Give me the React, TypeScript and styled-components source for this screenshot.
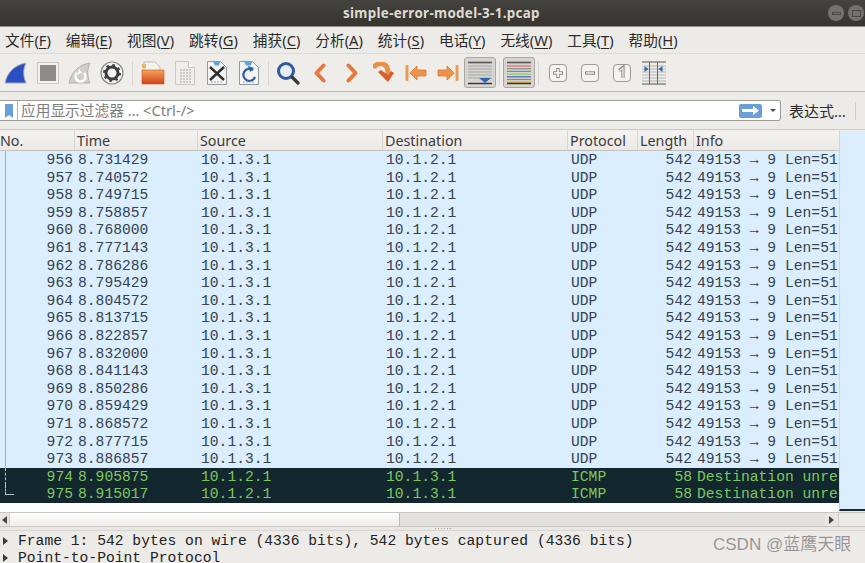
import styled, { createGlobalStyle } from "styled-components";

const GlobalStyle = createGlobalStyle`
  html, body { margin:0; padding:0; background:#edebe8; }
  body { width:865px; height:563px; overflow:hidden; }
`;

const UI = `"Noto Sans","Noto Sans CJK SC",sans-serif`;
const MONO = `"Liberation Mono","DejaVu Sans Mono",monospace`;

const Window = styled.div`
  position:relative;
  width:865px;
  height:563px;
  display:flex;
  flex-direction:column;
  overflow:hidden;
  background:#edebe8;
  font-family:${UI};
`;

const TitleBar = styled.div`
  height:27px;
  flex:none;
  display:flex;
  align-items:center;
  justify-content:flex-end;
  position:relative;
  background:linear-gradient(#45433f,#35342f);
  border-bottom:1px solid #8f8d88;
  box-sizing:border-box;
  gap:3px;
`;

const Title = styled.div`
  position:absolute;
  left:343px;
  top:4px;
  font-size:13.4px;
  letter-spacing:.32px;
  font-weight:700;
  line-height:18px;
  color:#dfdbd2;
  white-space:nowrap;
`;

const WinBtn = styled.span`
  width:16px;
  height:16px;
  border-radius:50%;
  background:#74726c;
  display:flex;
  align-items:center;
  justify-content:center;
  margin-right:1px;
  &::after{
    content:"";
    width:7px;
    height:${({$max})=>$max?"5px":"1px"};
    border:1px solid #4a4843;
  }
`;

const MenuBar = styled.div`
  height:27px;
  flex:none;
  display:flex;
  align-items:center;
  padding-left:5px;
  gap:14.9px;
  box-sizing:border-box;
  background:#edebe8;
  border-bottom:1px solid #dedbd6;
`;

const MenuItem = styled.div`
  font-size:14.7px;
  line-height:20px;
  color:#2b2b2b;
  white-space:nowrap;
  u{ text-underline-offset:2px; }
`;

const ToolBar = styled.div`
  height:38px;
  flex:none;
  display:flex;
  align-items:center;
  box-sizing:border-box;
  background:#efedea;
  border-bottom:1px solid #b9b6b0;
`;

const ToolBtn = styled.div`
  width:32px;
  height:31px;
  flex:none;
  display:flex;
  align-items:center;
  justify-content:center;
  box-sizing:border-box;
  border-radius:3px;
  ${({$on})=>$on?"background:#d6d4d0;border:1px solid #a9a7a2;":""}
  svg{ filter:blur(0.35px); }
`;

const ToolSep = styled.div`
  width:1px;
  height:24px;
  flex:none;
  background:#d8d5d0;
  margin:0 ${({$w})=>$w}px;
`;

const FilterBar = styled.div`
  height:38px;
  flex:none;
  display:flex;
  align-items:center;
  box-sizing:border-box;
  background:#edebe8;
  border-bottom:1px solid #cfccc7;
`;

const FilterInput = styled.div`
  width:781px;
  height:21px;
  box-sizing:border-box;
  display:flex;
  align-items:center;
  background:#fff;
  border:1px solid #9d9b97;
  border-left:none;
  border-radius:0 3px 3px 0;
`;

const BookmarkBox = styled.div`
  width:17px;
  height:100%;
  flex:none;
  display:flex;
  align-items:center;
  justify-content:center;
  border-right:1px solid #b5b3af;
`;

const FilterHint = styled.div`
  flex:1;
  padding-left:3px;
  font-size:14.7px;
  line-height:21px;
  color:#7d7d7d;
  white-space:nowrap;
`;

const ApplyBtn = styled.div`
  width:23px;
  height:14px;
  margin-right:7px;
  flex:none;
  border-radius:2px;
  background:#6b9fd8;
  display:flex;
  align-items:center;
  justify-content:center;
`;

const Caret = styled.div`
  width:0;
  height:0;
  margin-left:1px;
  margin-right:4px;
  border-left:3px solid transparent;
  border-right:3px solid transparent;
  border-top:3px solid #4a4a4a;
`;

const ExprLabel = styled.div`
  margin-left:8px;
  font-size:15px;
  color:#2b2b2b;
  white-space:nowrap;
`;

const ExprSep = styled.div`
  width:1px;
  height:18px;
  margin-left:9px;
  background:#d0cdc8;
`;

const PacketPane = styled.div`
  height:381px;
  flex:none;
  margin-top:1px;
  display:flex;
`;

const TableWrap = styled.div`
  width:839px;
  flex:none;
  display:flex;
  flex-direction:column;
  background:#fff;
`;

const cols = "75px 123px 185px 185px 70px 56px 145px";

const HeaderRow = styled.div`
  height:20px;
  flex:none;
  display:grid;
  grid-template-columns:${cols};
  background:linear-gradient(#f4f3f1,#ebe9e6);
  box-sizing:border-box;
  border-bottom:1px solid #c4c1bc;
`;

const HeaderCell = styled.div`
  padding-left:${({$first})=>$first?"0":"2px"};
  font-size:14.3px;
  line-height:20px;
  color:#3a3a3a;
  border-right:1px solid #d9d6d1;
  overflow:hidden;
  &:last-child{ border-right:none; }
`;

const Row = styled.div`
  height:17.6px;
  flex:none;
  display:grid;
  grid-template-columns:${cols};
  grid-template-rows:17.6px;
  font-family:${MONO};
  font-size:14.67px;
  line-height:19.6px;
  white-space:pre;
  background:${({$dark})=>$dark?"#12272e":"#daeeff"};
  color:${({$dark})=>$dark?"#80c85e":"#36424c"};
`;

const Cell = styled.div`
  overflow:hidden;
  padding:0 ${({$right})=>$right?"2px":"0"} 0 ${({$right})=>$right?"0":"3px"};
  text-align:${({$right})=>$right?"right":"left"};
`;

const NoCell = styled(Cell)`
  position:relative;
  &::before{
    content:"";
    position:absolute;
    left:5px;
    top:0;
    height:${({$tree})=>$tree==="end"?"9px":"100%"};
    border-left:1px ${({$tree})=>$tree==="line"?"solid #9fb0bd":"dashed #b8c4c8"};
    border-bottom:${({$tree})=>$tree==="end"?"1px solid #b8c4c8":"none"};
    width:${({$tree})=>$tree==="end"?"8px":"0"};
  }
`;

const TableFill = styled.div`
  flex:1;
  background:#fff;
`;

const MiniMap = styled.div`
  flex:1;
  background:#daeeff;
  border-left:1px solid #c6d6e2;
  border-bottom:2px solid #1a2a30;
  margin-bottom:1px;
`;

const ScrollBar = styled.div`
  height:15px;
  flex:none;
  display:flex;
  align-items:stretch;
  box-sizing:border-box;
  border-top:1px solid #c9c6c1;
  border-bottom:1px solid #c9c6c1;
`;

const ScrollArrow = styled.div`
  width:${({$w})=>$w}px;
  flex:none;
  display:flex;
  align-items:center;
  justify-content:center;
  background:#e9e7e3;
  &::after{
    content:"";
    border-top:4px solid transparent;
    border-bottom:4px solid transparent;
    ${({$dir})=>$dir==="l"?"border-right:5px solid #444;":"border-left:5px solid #444;"}
  }
`;

const ScrollThumb = styled.div`
  width:391px;
  flex:none;
  background:linear-gradient(#fdfdfc,#f0eeeb);
  border-left:1px solid #d2cfca;
  border-right:1px solid #bdbab5;
  box-sizing:border-box;
`;

const ScrollTrough = styled.div`
  width:425px;
  flex:none;
  background:#e3e1dd;
`;

const ScrollEnd = styled.div`
  flex:1;
  background:#edebe8;
  border-left:1px solid #d2cfca;
`;

const Splitter = styled.div`
  height:3px;
  flex:none;
  display:flex;
  align-items:center;
  padding-left:435px;
  background:#e9e7e3;
`;

const Grip = styled.div`
  width:16px;
  height:1px;
  background:repeating-linear-gradient(90deg,#a9a7a2 0 1px,transparent 1px 3px);
`;

const Details = styled.div`
  flex:1;
  min-height:0;
  border-top:1px solid #d9d6d1;
  padding:1px 0 0 3px;
  font-family:${MONO};
  font-size:14.67px;
  color:#222;
  overflow:hidden;
`;

const DetailRow = styled.div`
  height:17.6px;
  line-height:12px;
  display:flex;
  align-items:center;
  white-space:pre;
`;

const Expander = styled.span`
  flex:none;
  width:15px;
  line-height:0;
  &::before{
    content:"";
    display:inline-block;
    border-top:4px solid transparent;
    border-bottom:4px solid transparent;
    border-left:5px solid #3c3c3c;
  }
`;

const Watermark = styled.div`
  position:absolute;
  left:713px;
  top:533px;
  font-family:"Liberation Sans","Noto Sans CJK SC",sans-serif;
  font-size:17px;
  line-height:24px;
  color:rgba(120,120,120,.75);
  white-space:nowrap;
`;

const menus: [string,string][] = [
  ["文件","F"],["编辑","E"],["视图","V"],["跳转","G"],["捕获","C"],["分析","A"],
  ["统计","S"],["电话","Y"],["无线","W"],["工具","T"],["帮助","H"],
];

const times = [
  "8.731429","8.740572","8.749715","8.758857","8.768000","8.777143","8.786286","8.795429",
  "8.804572","8.813715","8.822857","8.832000","8.841143","8.850286","8.859429","8.868572",
  "8.877715","8.886857",
];

const Shark = () => (
  <svg width="24" height="24" viewBox="0 0 24 24">
    <path d="M1 22C3 12 10 4 22 2c-3 6-3 13 0 20z" fill="#2a4fc0" stroke="#a3aab5" strokeWidth="1"/>
  </svg>
);

const StopIcon = () => (
  <svg width="22" height="22" viewBox="0 0 22 22">
    <rect x=".5" y=".5" width="21" height="21" fill="#f2f1ef" stroke="#c9c8c5"/>
    <rect x="3" y="3" width="16" height="16" fill="#8c8c8a"/>
  </svg>
);

const RestartIcon = () => (
  <svg width="24" height="24" viewBox="0 0 24 24">
    <path d="M1 22C3 12 10 4 22 2c-3 6-3 13 0 20z" fill="#cfcecb" stroke="#b0afab"/>
    <path d="M9 12a5 5 0 1 0 7 0" fill="none" stroke="#fff" strokeWidth="2.5"/>
    <path d="M11 8l3 4-4 1z" fill="#fff"/>
  </svg>
);

const GearIcon = () => (
  <svg width="24" height="24" viewBox="0 0 24 24">
    <circle cx="12" cy="12" r="11" fill="#f5f5f3" stroke="#8a8a88" strokeWidth="1.2"/>
    <circle cx="12" cy="12" r="6" fill="none" stroke="#3d3d3d" strokeWidth="3"/>
    <circle cx="12" cy="12" r="8" fill="none" stroke="#3d3d3d" strokeWidth="2" strokeDasharray="2.6 3.7"/>
  </svg>
);

const OpenIcon = () => (
  <svg width="24" height="24" viewBox="0 0 24 24">
    <path d="M3 1h11l5 5v6H3z" fill="#f3f3f1" stroke="#bdbcb9"/>
    <rect x="1" y="3" width="4" height="4" fill="#e8b26a"/>
    <defs>
      <linearGradient id="openG" x1="0" y1="0" x2="0" y2="1">
        <stop offset="0" stopColor="#f3a45c"/>
        <stop offset="1" stopColor="#d4401c"/>
      </linearGradient>
    </defs>
    <path d="M1 9h22v14H1z" fill="url(#openG)" stroke="#c2552a" strokeWidth=".6"/>
  </svg>
);

const FileIcon = () => (
  <svg width="20" height="24" viewBox="0 0 20 24">
    <path d="M.5.5h13l6 6v17H.5z" fill="#efeeec" stroke="#c7c6c3"/>
    <path d="M13.5.5v6h6" fill="#fff" stroke="#c7c6c3"/>
    {[8,11,14,17,20].map(y=>[5,8,11,14].map(x=>(
      <rect key={`${x}-${y}`} x={x} y={y} width="2" height="2" fill="#c9c8c5"/>
    )))}
  </svg>
);

const CloseFileIcon = () => (
  <svg width="20" height="24" viewBox="0 0 20 24">
    <path d="M.5.5h13l6 6v17H.5z" fill="#f3f3f2" stroke="#8d9aa0"/>
    <path d="M6 .5h7l-1 4H8z" fill="#5aa6dc"/>
    <path d="M3 6l14 13M17 6L3 19" stroke="#2e2e2e" strokeWidth="2.4"/>
    <path d="M4 21h12" stroke="#a9a9a7" strokeDasharray="2 1"/>
  </svg>
);

const ReloadIcon = () => (
  <svg width="20" height="24" viewBox="0 0 20 24">
    <path d="M.5.5h13l6 6v17H.5z" fill="#f3f3f2" stroke="#8d9aa0"/>
    <path d="M5 .5h8l-1 4H7z" fill="#5aa6dc"/>
    <path d="M14 9a6 6 0 1 0 2 7" fill="none" stroke="#2c5da8" strokeWidth="2.2"/>
    <path d="M9 5l6 2-4 4z" fill="#2c5da8"/>
    <path d="M4 21h12" stroke="#a9a9a7" strokeDasharray="2 1"/>
  </svg>
);

const FindIcon = () => (
  <svg width="24" height="24" viewBox="0 0 24 24">
    <circle cx="10" cy="10" r="7.5" fill="#e6eef6" stroke="#2f5aa5" strokeWidth="3"/>
    <path d="M16 16l6 6" stroke="#3a3a3a" strokeWidth="3.2" strokeLinecap="round"/>
  </svg>
);

const ChevronIcon = ({flip}:{flip?:boolean}) => (
  <svg width="14" height="20" viewBox="0 0 14 20" style={flip?{transform:"scaleX(-1)"}:undefined}>
    <path d="M10.5 2.5L3.5 10l7 7.5" fill="none" stroke="#e8773f" strokeWidth="4" strokeLinecap="round" strokeLinejoin="round"/>
  </svg>
);

const JumpIcon = () => (
  <svg width="22" height="22" viewBox="0 0 22 22">
    <path d="M2 4c2-2 5-3 8-2 4 1 5 4 5 9" fill="none" stroke="#ea9048" strokeWidth="5" strokeLinecap="round"/>
    <path d="M5 10l3-2 7 5 3-4 3 2-6 9z" fill="#dd5e28"/>
  </svg>
);

const EdgeIcon = ({flip}:{flip?:boolean}) => (
  <svg width="24" height="20" viewBox="0 0 24 20" style={flip?{transform:"scaleX(-1)"}:undefined}>
    <rect x="1.5" y="2" width="3" height="16" rx="1" fill="#ee9a55"/>
    <path d="M13 3L6 10l7 7v-4h9V7h-9z" fill="#f0924a" stroke="#e2732f" strokeWidth=".8" strokeLinejoin="round"/>
  </svg>
);

const ScrollIcon = () => (
  <svg width="24" height="24" viewBox="0 0 24 24">
    <path d="M0 1.5h24" stroke="#555" strokeWidth="1.6"/>
    {[5,8,11,14,17].map(y=>(<path key={y} d={`M0 ${y}h24`} stroke="#a8a8a6"/>))}
    <path d="M0 22.5h24" stroke="#333" strokeWidth="1.4"/>
    <path d="M11 17h12l-6 5z" fill="#2f64b0"/>
  </svg>
);

const ColorIcon = () => (
  <svg width="24" height="24" viewBox="0 0 24 24">
    <path d="M0 1.5h24" stroke="#555" strokeWidth="1.6"/>
    {["#e5666d","#8a8a8a","#5b8fd6","#8ccf4e","#4a62c0","#8a8a8a","#d9a81e"].map((c,i)=>(
      <path key={i} d={`M0 ${5+i*2.7}h24`} stroke={c} strokeWidth="1.2"/>
    ))}
    <path d="M0 22.5h24" stroke="#333" strokeWidth="1.4"/>
  </svg>
);

const ZoomIcon = ({kind}:{kind:"in"|"out"|"one"}) => (
  <svg width="18" height="18" viewBox="0 0 18 18">
    <rect x=".5" y=".5" width="17" height="17" rx="3.5" fill="#f4f3f1" stroke="#9b9a97"/>
    {kind==="in" && <path d="M9 4v10M4 9h10" stroke="#8a8a88" strokeWidth="3.4"/>}
    {kind==="in" && <path d="M9 5v8M5 9h8" stroke="#fff" strokeWidth="1.6"/>}
    {kind==="out" && <path d="M4 9h10" stroke="#8a8a88" strokeWidth="3.4"/>}
    {kind==="out" && <path d="M5 9h8" stroke="#e8e8e6" strokeWidth="1.6"/>}
    {kind==="one" && <path d="M6 6.5l4-3V14" fill="none" stroke="#8a8a88" strokeWidth="3.2"/>}
    {kind==="one" && <path d="M6.5 6.5l3.5-2.5V14" fill="none" stroke="#f4f3f1" strokeWidth="1.2"/>}
  </svg>
);

const ResizeIcon = () => (
  <svg width="24" height="24" viewBox="0 0 24 24">
    <path d="M0 1h24M0 23h24" stroke="#555" strokeWidth="1.2"/>
    {[5,8,11,14,17,20].map(y=>(<path key={y} d={`M0 ${y}h24`} stroke="#b5b5b3"/>))}
    <path d="M7.5 1v22M15.5 1v22" stroke="#666"/>
    <path d="M2.5 5v6l4-3zM20.5 5v6l-4-3z" fill="#2f64b0"/>
  </svg>
);

const App = () => {
  return (
    <Window>
      <GlobalStyle />
      <TitleBar>
        <Title>simple-error-model-3-1.pcap</Title>
        <WinBtn />
        <WinBtn $max />
      </TitleBar>

      <MenuBar>
        {menus.map(([name,key])=>(
          <MenuItem key={key}>{name}(<u>{key}</u>)</MenuItem>
        ))}
      </MenuBar>

      <ToolBar>
        <ToolBtn><Shark /></ToolBtn>
        <ToolBtn><StopIcon /></ToolBtn>
        <ToolBtn><RestartIcon /></ToolBtn>
        <ToolBtn><GearIcon /></ToolBtn>
        <ToolSep $w={4} />
        <ToolBtn><OpenIcon /></ToolBtn>
        <ToolBtn><FileIcon /></ToolBtn>
        <ToolBtn><CloseFileIcon /></ToolBtn>
        <ToolBtn><ReloadIcon /></ToolBtn>
        <ToolSep $w={3} />
        <ToolBtn><FindIcon /></ToolBtn>
        <ToolBtn><ChevronIcon /></ToolBtn>
        <ToolBtn><ChevronIcon flip /></ToolBtn>
        <ToolBtn><JumpIcon /></ToolBtn>
        <ToolBtn><EdgeIcon /></ToolBtn>
        <ToolBtn><EdgeIcon flip /></ToolBtn>
        <ToolBtn $on><ScrollIcon /></ToolBtn>
        <ToolSep $w={3} />
        <ToolBtn $on><ColorIcon /></ToolBtn>
        <ToolSep $w={3} />
        <ToolBtn><ZoomIcon kind="in" /></ToolBtn>
        <ToolBtn><ZoomIcon kind="out" /></ToolBtn>
        <ToolBtn><ZoomIcon kind="one" /></ToolBtn>
        <ToolBtn><ResizeIcon /></ToolBtn>
      </ToolBar>

      <FilterBar>
        <FilterInput>
          <BookmarkBox>
            <svg width="8" height="14" viewBox="0 0 8 14">
              <path d="M0 0h8v14L4 11 0 14z" fill="#6b9fd8"/>
            </svg>
          </BookmarkBox>
          <FilterHint>应用显示过滤器 … &lt;Ctrl-/&gt;</FilterHint>
          <ApplyBtn>
            <svg width="17" height="9" viewBox="0 0 17 9">
              <path d="M0 3h11V0l6 4.5-6 4.5V6H0z" fill="#fff"/>
            </svg>
          </ApplyBtn>
          <Caret />
        </FilterInput>
        <ExprLabel>表达式…</ExprLabel>
        <ExprSep />
      </FilterBar>

      <PacketPane>
        <TableWrap>
          <HeaderRow>
            <HeaderCell $first>No.</HeaderCell>
            <HeaderCell>Time</HeaderCell>
            <HeaderCell>Source</HeaderCell>
            <HeaderCell>Destination</HeaderCell>
            <HeaderCell>Protocol</HeaderCell>
            <HeaderCell>Length</HeaderCell>
            <HeaderCell>Info</HeaderCell>
          </HeaderRow>
          {times.map((t,i)=>(
            <Row key={t}>
              <NoCell $right $tree="line">{956+i}</NoCell>
              <Cell>{t}</Cell>
              <Cell>10.1.3.1</Cell>
              <Cell>10.1.2.1</Cell>
              <Cell>UDP</Cell>
              <Cell $right>542</Cell>
              <Cell>49153 → 9 Len=51</Cell>
            </Row>
          ))}
          {[["974","8.905875","dash"],["975","8.915017","end"]].map(([no,t,tree])=>(
            <Row key={no} $dark>
              <NoCell $right $tree={tree}>{no}</NoCell>
              <Cell>{t}</Cell>
              <Cell>10.1.2.1</Cell>
              <Cell>10.1.3.1</Cell>
              <Cell>ICMP</Cell>
              <Cell $right>58</Cell>
              <Cell>Destination unre</Cell>
            </Row>
          ))}
          <TableFill />
        </TableWrap>
        <MiniMap />
      </PacketPane>

      <ScrollBar>
        <ScrollArrow $w={9} $dir="l" />
        <ScrollThumb />
        <ScrollTrough />
        <ScrollArrow $w={13} $dir="r" />
        <ScrollEnd />
      </ScrollBar>

      <Splitter><Grip /></Splitter>

      <Details>
        <DetailRow><Expander />Frame 1: 542 bytes on wire (4336 bits), 542 bytes captured (4336 bits)</DetailRow>
        <DetailRow><Expander />Point-to-Point Protocol</DetailRow>
      </Details>

      <Watermark>CSDN @蓝鹰天眼</Watermark>
    </Window>
  );
};

export default App;
